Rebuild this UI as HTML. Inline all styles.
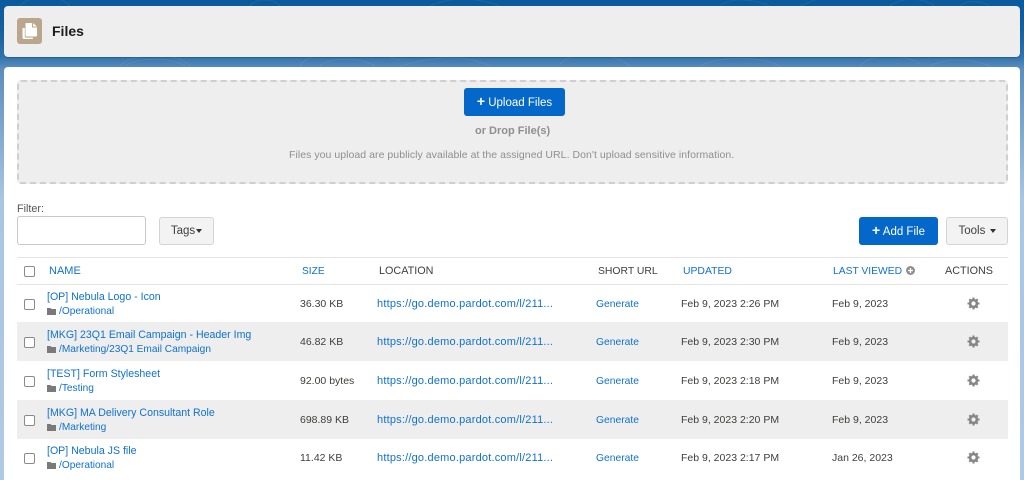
<!DOCTYPE html>
<html><head><meta charset="utf-8"><style>
html,body{margin:0;padding:0;height:480px;overflow:hidden}
#w{position:relative;width:1024px;height:480px;overflow:hidden;font-family:"Liberation Sans",sans-serif;font-size:10.5px;color:#3e3e3c;background:linear-gradient(180deg,#0a5a9e 0,#14609f 30px,#2f72ad 56px,#5a8dbd 68px,#a9c5e3 200px,#b0c9e5 480px)}
.a{position:absolute;white-space:nowrap}
.l{color:#0f72cf}
.panel{position:absolute;background:#fff;left:4px;top:67px;width:1016px;height:430px;border-radius:4px}
.hdr{position:absolute;left:4px;top:6px;width:1016px;height:51px;background:#eeeeee;border-radius:4px;box-shadow:0 1px 1px rgba(0,0,0,.2)}
.ic{position:absolute;left:17px;top:18px;width:25px;height:26px;background:#b9a68c;border-radius:3px}
.drop{position:absolute;left:17px;top:80px;width:987px;height:100px;background:#eeeeee;border:2px dashed #cfcfcf;border-radius:4px}
.btn{position:absolute;background:#0467ca;color:#fff;border-radius:3px;text-align:center;font-size:11.5px}
.gbtn{position:absolute;background:#f3f3f3;border:1px solid #d4d4d4;border-radius:3px;text-align:center;color:#3e3e3c;box-sizing:border-box;font-size:11.5px}
.row{position:absolute;left:17px;width:991px}
.cb{position:absolute;left:24px;width:9px;height:9px;border:1px solid #8a8a8a;border-radius:2px;background:#fff}
.th{top:265px;font-size:10.8px}
.th2{top:266px}
.n{font-size:10.6px;left:47px}
.s{font-size:10.15px;left:59px}
.u{left:377px;font-size:11px;letter-spacing:.2px}
.g{left:596px;font-size:10.3px}
.car{display:inline-block;width:0;height:0;border:3px solid transparent;border-top:4px solid #333;border-bottom:0;vertical-align:middle;margin-left:1px}
</style></head><body><div id="w">
<svg class="a" style="left:0;top:0" width="1024" height="68" fill="none" stroke="#fff" stroke-opacity=".07" stroke-width="1"><path d="M20 6C30-6 60-6 70 6M120 66c10-14 60-14 70 0M125 66c8-9 50-9 60 0M300 66c8-16 60-20 100-6M320 66c10-9 40-9 55 0M400 66c30-8 60-14 90 0M560 64c15-14 50-14 70 2M700 66c20-10 60-10 80 0M860 66c10-12 40-14 60-2M930 66c14-8 40-8 60 0M250 6c5-8 25-8 30 0M430 6c20-10 50-8 70 0M720 6c10-8 30-8 50 0M800 6l20-8M890 6c10-8 30-10 45 0M960 6c8-6 20-6 30 0"/></svg>
<div class="hdr"></div>
<div class="ic"><svg width="25" height="26" viewBox="0 0 25 26"><path d="M5.500 10h2.300v8.500c0 .7.400 1.100 1.100 1.100h7V21H7c-1 0-1.500-.5-1.500-1.500z" fill="#fff"/><path d="M8.500 6c0-.6.400-1 1-1H15v4.500h5v8c0 .6-.4 1-1 1H9.500c-.6 0-1-.4-1-1z" fill="#fff"/><path d="M16 5l4 3.500h-4z" fill="#fff"/></svg></div>
<div class="a" style="left:52px;top:23px;font-size:14px;font-weight:700;color:#1c1c1c">Files</div>
<div class="panel"></div>
<div class="drop"></div>
<div class="btn" style="left:464px;top:88px;width:101px;height:28px;line-height:27px"><b style="font-size:14px">+</b> Upload Files</div>
<div class="a" style="left:475px;top:125px;font-weight:700;color:#8f8f8f;font-size:11px">or Drop File(s)</div>
<div class="a" style="left:289px;top:149px;color:#8f8f8f;font-size:10.5px;letter-spacing:.045px">Files you upload are publicly available at the assigned URL. Don't upload sensitive information.</div>
<div class="a" style="left:17px;top:203px;color:#555;font-size:10.8px">Filter:</div>
<div class="a" style="left:17px;top:216px;width:127px;height:27px;background:#fff;border:1px solid #c9c9c9;border-radius:3px"></div>
<div class="gbtn" style="left:159px;top:217px;width:55px;height:28px;line-height:26px">Tags<span class="car"></span></div>
<div class="btn" style="left:859px;top:217px;width:79px;height:28px;line-height:27px"><b style="font-size:14px">+</b> Add File</div>
<div class="gbtn" style="left:946px;top:217px;width:62px;height:28px;line-height:26px">Tools <span class="car"></span></div>
<div class="row" style="top:257px;height:26px;border-top:1px solid #e4e4e4;border-bottom:1px solid #e4e4e4"></div>
<div class="row" style="top:322px;height:39px;background:#eeeeee"></div>
<div class="row" style="top:400px;height:39px;background:#eeeeee"></div>
<div class="cb" style="top:266px"></div><div class="cb" style="top:299px"></div><div class="cb" style="top:337px"></div><div class="cb" style="top:376px"></div><div class="cb" style="top:415px"></div><div class="cb" style="top:453px"></div>
<div class="a th l" style="left:49px;font-size:11px">NAME</div><div class="a th th2 l" style="left:302px;font-size:10.2px">SIZE</div><div class="a th" style="left:379px">LOCATION</div><div class="a th th2" style="left:598px;font-size:10.4px">SHORT URL</div><div class="a th th2 l" style="left:683px;font-size:10.4px">UPDATED</div><div class="a th th2 l" style="left:833px;font-size:10.3px">LAST VIEWED</div><div class="a th" style="left:945px">ACTIONS</div>
<svg class="a" style="left:906px;top:266px" width="9" height="9" viewBox="0 0 9 9"><circle cx="4.500" cy="4.500" r="4.500" fill="#8f8f8f"/><path d="M2 4.500h5M4.500 2v5" stroke="#fff" stroke-width="1.300"/></svg>

<div class="a l n" style="top:291px">[OP] Nebula Logo - Icon</div><div class="a l s" style="top:306px">/Operational</div>
<div class="a l n" style="top:329px">[MKG] 23Q1 Email Campaign - Header Img</div><div class="a l s" style="top:344px">/Marketing/23Q1 Email Campaign</div>
<div class="a l n" style="top:368px">[TEST] Form Stylesheet</div><div class="a l s" style="top:383px">/Testing</div>
<div class="a l n" style="top:407px">[MKG] MA Delivery Consultant Role</div><div class="a l s" style="top:422px">/Marketing</div>
<div class="a l n" style="top:445px">[OP] Nebula JS file</div><div class="a l s" style="top:460px">/Operational</div>

<svg class="a" style="left:47px;top:307px" width="9" height="8"><path d="M0 1h3.500l1 1H9v6H0z" fill="#7a7a7a"/></svg>
<svg class="a" style="left:47px;top:345px" width="9" height="8"><path d="M0 1h3.500l1 1H9v6H0z" fill="#7a7a7a"/></svg>
<svg class="a" style="left:47px;top:384px" width="9" height="8"><path d="M0 1h3.500l1 1H9v6H0z" fill="#7a7a7a"/></svg>
<svg class="a" style="left:47px;top:423px" width="9" height="8"><path d="M0 1h3.500l1 1H9v6H0z" fill="#7a7a7a"/></svg>
<svg class="a" style="left:47px;top:461px" width="9" height="8"><path d="M0 1h3.500l1 1H9v6H0z" fill="#7a7a7a"/></svg>

<div class="a" style="left:300px;top:298px">36.30 KB</div><div class="a" style="left:300px;top:336px">46.82 KB</div><div class="a" style="left:300px;top:375px">92.00 bytes</div><div class="a" style="left:300px;top:414px">698.89 KB</div><div class="a" style="left:300px;top:452px">11.42 KB</div>

<div class="a l u" style="top:298px">https://go.demo.pardot.com/l/211...</div><div class="a l u" style="top:336px">https://go.demo.pardot.com/l/211...</div><div class="a l u" style="top:375px">https://go.demo.pardot.com/l/211...</div><div class="a l u" style="top:414px">https://go.demo.pardot.com/l/211...</div><div class="a l u" style="top:452px">https://go.demo.pardot.com/l/211...</div>

<div class="a l g" style="top:298px;margin-top:1px">Generate</div><div class="a l g" style="top:336px;margin-top:1px">Generate</div><div class="a l g" style="top:375px;margin-top:1px">Generate</div><div class="a l g" style="top:414px;margin-top:1px">Generate</div><div class="a l g" style="top:452px;margin-top:1px">Generate</div>

<div class="a" style="left:681px;top:298px">Feb 9, 2023 2:26 PM</div><div class="a" style="left:681px;top:336px">Feb 9, 2023 2:30 PM</div><div class="a" style="left:681px;top:375px">Feb 9, 2023 2:18 PM</div><div class="a" style="left:681px;top:414px">Feb 9, 2023 2:20 PM</div><div class="a" style="left:681px;top:452px">Feb 9, 2023 2:17 PM</div>

<div class="a" style="left:832px;top:298px">Feb 9, 2023</div><div class="a" style="left:832px;top:336px">Feb 9, 2023</div><div class="a" style="left:832px;top:375px">Feb 9, 2023</div><div class="a" style="left:832px;top:414px">Feb 9, 2023</div><div class="a" style="left:832px;top:452px">Jan 26, 2023</div>

<svg width="0" height="0" style="position:absolute"><defs><g id="gear"><circle cx="6.500" cy="6.500" r="3.400" fill="none" stroke="#868686" stroke-width="2.600"/><path d="M6.500.5v3M6.500 9.500v3M.5 6.500h3M9.500 6.500h3M2.300 2.300l2 2M8.700 8.700l2 2M10.700 2.300l-2 2M4.300 8.700l-2 2" stroke="#868686" stroke-width="2.100"/></g></defs></svg>
<svg class="a" style="left:967px;top:297px" width="13" height="13"><use href="#gear"/></svg>
<svg class="a" style="left:967px;top:335px" width="13" height="13"><use href="#gear"/></svg>
<svg class="a" style="left:967px;top:374px" width="13" height="13"><use href="#gear"/></svg>
<svg class="a" style="left:967px;top:413px" width="13" height="13"><use href="#gear"/></svg>
<svg class="a" style="left:967px;top:451px" width="13" height="13"><use href="#gear"/></svg>
</div></body></html>
